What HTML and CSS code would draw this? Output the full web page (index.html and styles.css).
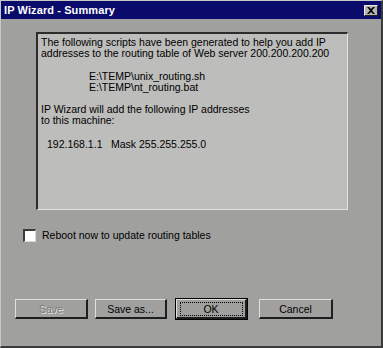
FILE: index.html
```html
<!DOCTYPE html>
<html>
<head>
<meta charset="utf-8">
<link rel="stylesheet" href="styles.css">
</head>
<body>
<div class="window">
  <div class="titlebar">
    <span class="title">IP Wizard - Summary</span>
    <span class="close"><svg width="8" height="7" viewBox="0 0 8 7"><path d="M0 0h2l2 2 2-2h2l-3 3.5 3 3.5h-2l-2-2-2 2h-2l3-3.5z" fill="#000"/></svg></span>
  </div>
  <div class="content">
    <div class="panel">
      <p class="p1">The following scripts have been generated to help you add IP<br>addresses to the routing table of Web server 200.200.200.200</p>
      <p class="paths">E:\TEMP\unix_routing.sh<br>E:\TEMP\nt_routing.bat</p>
      <p class="p2">IP Wizard will add the following IP addresses<br>to this machine:</p>
      <p class="addr"><span class="ip">192.168.1.1</span><span>Mask 255.255.255.0</span></p>
    </div>
    <label class="check"><span class="box"></span><span>Reboot now to update routing tables</span></label>
  </div>
  <div class="buttons">
    <div class="btn disabled w73">Save</div>
    <div class="btn w72">Save as...</div>
    <div class="btn default"><span class="focus">OK</span></div>
    <div class="btn cancel">Cancel</div>
  </div>
</div>
</body>
</html>
```
FILE: styles.css
```css
html, body { margin: 0; padding: 0; background: #a0a19e; }
body { font-family: "Liberation Sans", Arial, sans-serif; font-size: 10.5px; color: #000; }
.window {
  width: 383px; height: 348px; box-sizing: border-box;
  background: #a0a19e;
  border-top: 1px solid #c8c8c6; border-left: 1px solid #c8c8c6;
  border-right: 2px solid #3a3a3a; border-bottom: 2px solid #3a3a3a;
  display: flex; flex-direction: column;
}
.titlebar {
  height: 18px;
  background: #0b0b6c; color: #fff;
  display: flex; align-items: center; justify-content: space-between;
  padding: 0 3px 0 3px;
}
.title { font-weight: bold; font-size: 11px; letter-spacing: 0.1px; }
.close {
  width: 14px; height: 11px; box-sizing: border-box;
  background: #b4b4b2;
  border-top: 1px solid #e8e8e8; border-left: 1px solid #e8e8e8;
  border-right: 1px solid #202020; border-bottom: 1px solid #202020;
  display: flex; align-items: center; justify-content: center;
}
.content { padding: 13px 0 0 35px; }
.panel {
  width: 312px; height: 178px; box-sizing: border-box;
  background: #bdbdbb;
  border-top: 2px solid #2c2c2c; border-left: 2px solid #2c2c2c;
  border-right: 1px solid #e2e2e0; border-bottom: 1px solid #e2e2e0;
  padding: 3px 0 0 3px;
  line-height: 11px;
}
.panel p { margin: 0; }
.panel .paths { margin-top: 12px; padding-left: 48px; }
.panel .p2 { margin-top: 11px; }
.panel .addr { margin-top: 13px; padding-left: 6px; display: flex; }
.ip { width: 64px; }
.check { display: flex; align-items: center; gap: 6px; margin: 18px 0 0 -13px; height: 14px; }
.box {
  width: 13px; height: 13px; box-sizing: border-box; background: #fff;
  border-top: 2px solid #3a3a3a; border-left: 2px solid #3a3a3a;
  border-right: 1px solid #d8d8d8; border-bottom: 1px solid #d8d8d8;
}
.buttons { display: flex; padding: 57px 0 0 14px; }
.btn {
  width: 73px; height: 20px; box-sizing: border-box;
  display: flex; align-items: center; justify-content: center;
  background: #a0a19e;
  border-top: 1px solid #e0e0de; border-left: 1px solid #e0e0de;
  border-right: 2px solid #1e1e1e; border-bottom: 2px solid #1e1e1e;
}
.btn.w72 { width: 72px; margin-left: 7px; }
.btn.disabled { color: #7c7c7a; text-shadow: 1px 1px 0 #e4e4e2; }
.btn.default { outline: 1px solid #000; margin-left: 9px; width: 71px; }
.btn.cancel { width: 74px; margin-left: 12px; }
.focus {
  display: flex; align-items: center; justify-content: center;
  width: 61px; height: 12px; border: 1px dotted #000;
}
```
